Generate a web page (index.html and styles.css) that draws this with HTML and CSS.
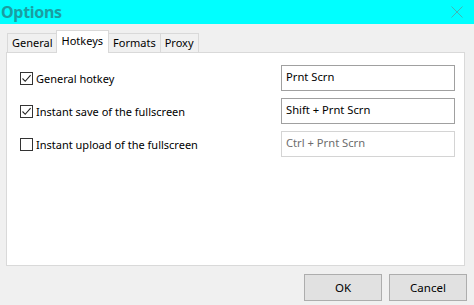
FILE: index.html
```html
<!DOCTYPE html>
<html>
<head>
<meta charset="utf-8">
<link rel="stylesheet" href="styles.css">
</head>
<body>
<div class="window">
  <div class="titlebar">
    <span class="title">Options</span>
    <svg class="close" width="12" height="12" viewBox="0 0 12 12"><path d="M0.5 0.5 L11.5 11.5 M11.5 0.5 L0.5 11.5" stroke="#3fb7b7" stroke-width="1" fill="none"/></svg>
  </div>
  <div class="body">
    <div class="tabs">
      <div class="tab">General</div>
      <div class="tab active">Hotkeys</div>
      <div class="tab">Formats</div>
      <div class="tab">Proxy</div>
    </div>
    <div class="panel">
      <div class="row">
        <label class="check"><span class="box"><svg width="11" height="11" viewBox="0 0 11 11"><path d="M1.5 5.5 L4.2 8.3 L9.6 2.2" stroke="#222" stroke-width="1.1" fill="none"/></svg></span>General hotkey</label>
        <div class="field">Prnt Scrn</div>
      </div>
      <div class="row">
        <label class="check"><span class="box"><svg width="11" height="11" viewBox="0 0 11 11"><path d="M1.5 5.5 L4.2 8.3 L9.6 2.2" stroke="#222" stroke-width="1.1" fill="none"/></svg></span>Instant save of the fullscreen</label>
        <div class="field">Shift + Prnt Scrn</div>
      </div>
      <div class="row">
        <label class="check"><span class="box"></span>Instant upload of the fullscreen</label>
        <div class="field disabled">Ctrl + Prnt Scrn</div>
      </div>
    </div>
    <div class="footer">
      <button class="btn">OK</button>
      <button class="btn">Cancel</button>
    </div>
  </div>
</div>
</body>
</html>
```
FILE: styles.css
```css
html, body {
  margin: 0;
  padding: 0;
  background: #f0f0f0;
}
.window {
  width: 474px;
  height: 305px;
  overflow: hidden;
  font-family: "Noto Sans", "Open Sans", sans-serif;
  font-size: 11px;
  color: #000;
}
.titlebar {
  height: 24px;
  background: #00ffff;
  display: flex;
  align-items: center;
  justify-content: space-between;
  padding: 0 11px 0 1px;
}
.title {
  font-weight: bold;
  font-size: 16px;
  letter-spacing: -0.3px;
  color: #1a9ea2;
  line-height: 24px;
}
.close {
  margin-top: -1px;
}
.body {
  padding: 6px 9px 0 6px;
}
.tabs {
  display: flex;
  align-items: flex-end;
  height: 22px;
  padding-left: 1px;
}
.tab {
  height: 18px;
  line-height: 18px;
  padding: 0 4px;
  border: 1px solid #d9d9d9;
  border-bottom: none;
  background: #f0f0f0;
  margin-right: -1px;
}
.tab.active {
  background: #fff;
  position: relative;
  z-index: 1;
  margin: 0 -1px -1px -1px;
  padding: 0 5px;
  height: 22px;
  line-height: 20px;
}
.panel {
  background: #fff;
  border: 1px solid #d9d9d9;
  padding: 12px 9px 0 13px;
  box-sizing: border-box;
  height: 214px;
  display: flex;
  flex-direction: column;
  gap: 7px;
}
.row {
  display: flex;
  align-items: center;
  justify-content: space-between;
  height: 26px;
}
.check {
  display: flex;
  align-items: center;
  gap: 3px;
  font-size: 11px;
}
.box {
  width: 13px;
  height: 13px;
  box-sizing: border-box;
  border: 1px solid #333;
  display: flex;
  align-items: center;
  justify-content: center;
  background: #fff;
}
.field {
  width: 174px;
  height: 26px;
  box-sizing: border-box;
  border: 1px solid #a0a0a0;
  padding: 2px 4px 0 4px;
  line-height: 18px;
  font-size: 11.2px;
}
.field.disabled {
  border-color: #d4d4d4;
  color: #6d6d6d;
}
.footer {
  display: flex;
  justify-content: flex-end;
  gap: 7px;
  padding-top: 8px;
  margin-right: -2px;
}
.btn {
  width: 78px;
  height: 27px;
  border: 1px solid #adadad;
  background: #e1e1e1;
  font-family: inherit;
  font-size: 11.5px;
  color: #000;
  padding: 0;
}
```
